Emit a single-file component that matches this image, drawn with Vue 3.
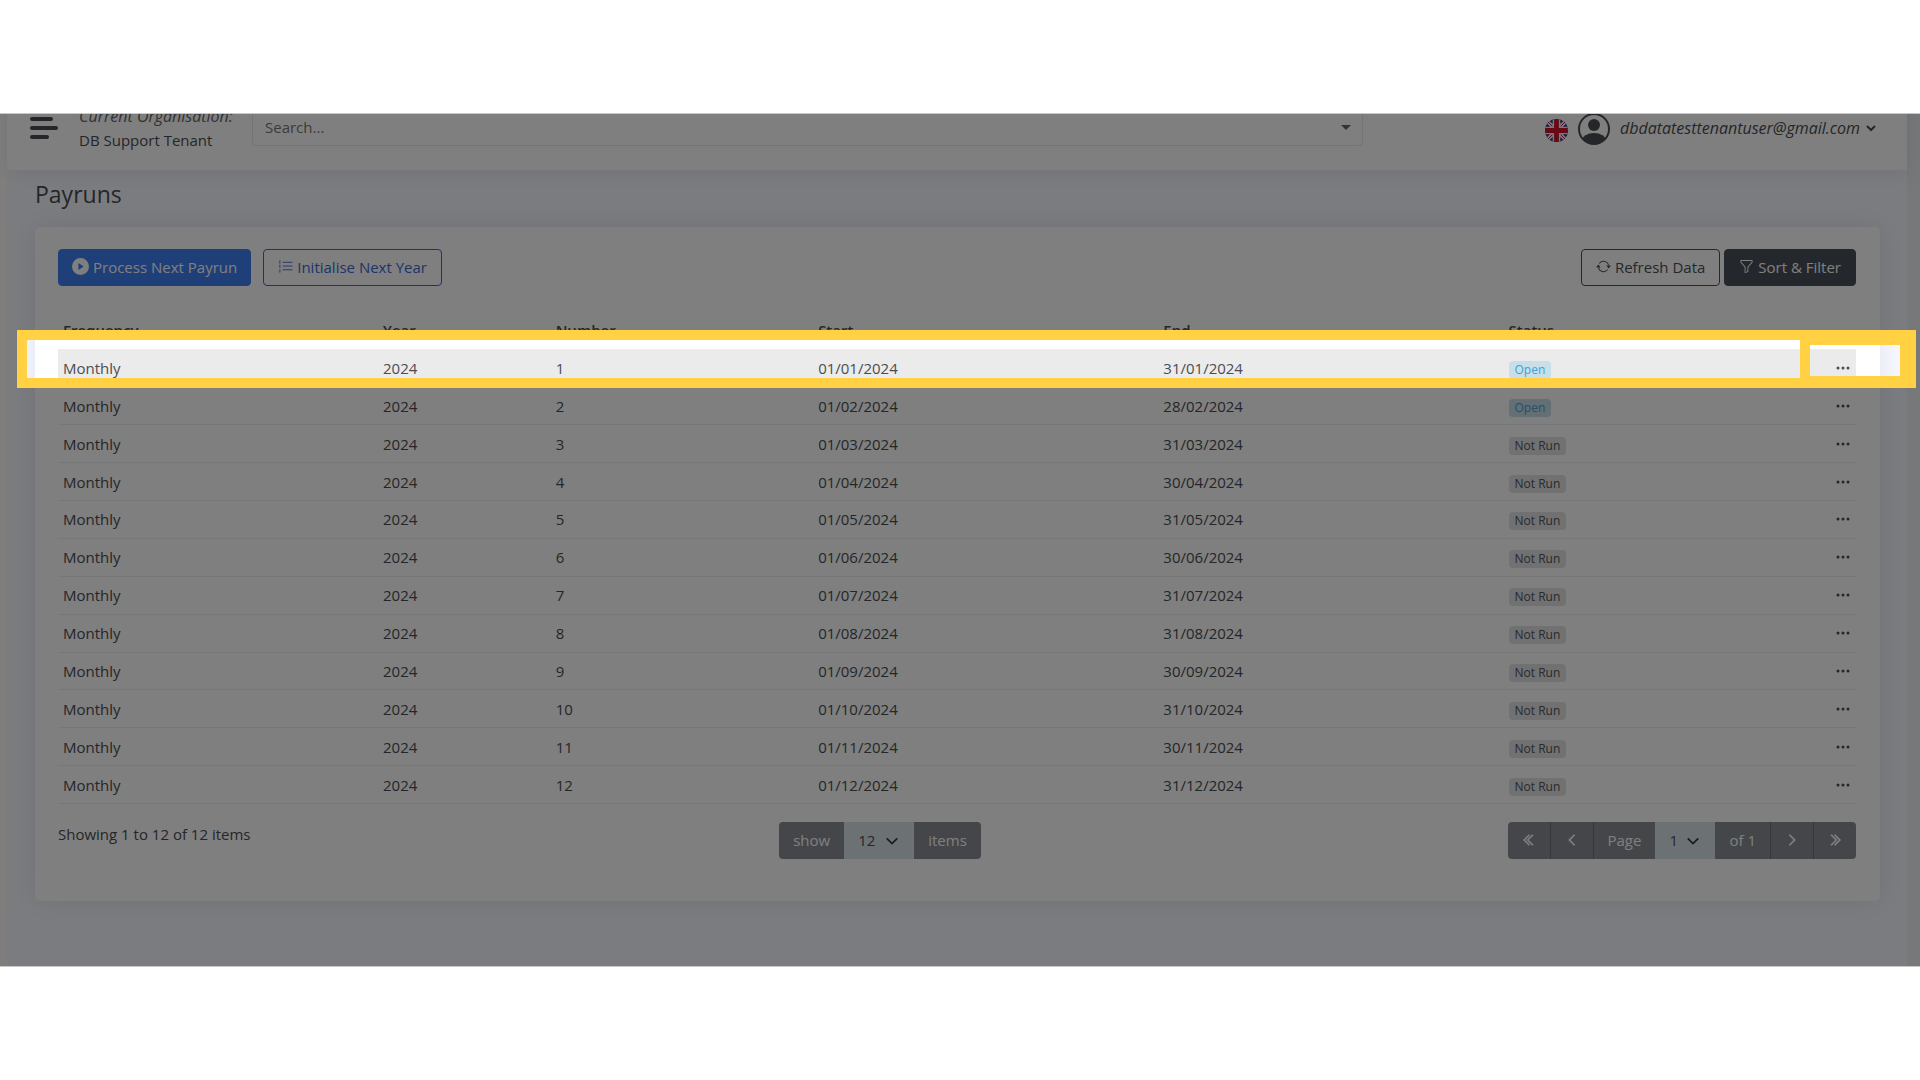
<script setup>
import { ref } from 'vue'

const ends = [
  '31/01/2024', '28/02/2024', '31/03/2024', '30/04/2024', '31/05/2024', '30/06/2024',
  '31/07/2024', '31/08/2024', '30/09/2024', '31/10/2024', '30/11/2024', '31/12/2024',
]
const payruns = ends.map((end, i) => ({
  number: i + 1,
  start: `01/${String(i + 1).padStart(2, '0')}/2024`,
  end,
  open: i < 2,
}))
const search = ref('')
const pageSize = ref('12')
const page = ref('1')
</script>

<template>
  <main class="stage">
    <div class="app">
      <header class="topbar">
        <button class="menu" type="button" aria-label="Toggle menu">
          <span class="line"></span><span class="line long"></span><span class="line short"></span>
        </button>
        <div class="org">
          <em>Current Organisation:</em>
          <span>DB Support Tenant</span>
        </div>
        <div class="search">
          <input v-model="search" type="text" placeholder="Search..." aria-label="Search" />
          <span class="caret"></span>
        </div>
        <div class="user">
          <svg class="flag" viewBox="0 0 24 24" aria-hidden="true">
            <clipPath id="disc"><circle cx="12" cy="12" r="12" /></clipPath>
            <g clip-path="url(#disc)">
              <rect width="24" height="24" fill="#0c3a8c" />
              <path d="M0 0l24 24M24 0L0 24" stroke="#f0f0f0" stroke-width="4" />
              <path d="M3 3l5 5M21 3l-5 5M3 21l5-5M21 21l-5-5" stroke="#d80027" stroke-width="1" />
              <path d="M12 0v24M0 12h24" stroke="#f0f0f0" stroke-width="8" />
              <path d="M12 0v24M0 12h24" stroke="#d0142c" stroke-width="5" />
            </g>
          </svg>
          <svg class="avatar" viewBox="0 0 32 32" aria-hidden="true">
            <clipPath id="face"><circle cx="16" cy="16" r="15" /></clipPath>
            <circle cx="16" cy="16" r="15" fill="none" stroke="currentColor" stroke-width="2" />
            <g clip-path="url(#face)" fill="currentColor">
              <circle cx="16" cy="12" r="6" />
              <ellipse cx="16" cy="28" rx="12" ry="8" />
            </g>
          </svg>
          <a class="email" href="#">dbdatatesttenantuser@gmail.com</a>
          <svg class="chev" viewBox="0 0 10 10" aria-hidden="true"><path d="M1 3l4 4 4-4" fill="none" stroke="currentColor" stroke-width="2" /></svg>
        </div>
      </header>

      <h1>Payruns</h1>

      <section class="card">
        <div class="toolbar">
          <button class="btn primary" type="button">
            <svg viewBox="0 0 16 16" fill="currentColor"><path d="M16 8A8 8 0 1 1 0 8a8 8 0 0 1 16 0zM6.8 5.1A.5.5 0 0 0 6 5.500v5a.5.5 0 0 0 .8.4l3.500-2.500a.5.5 0 0 0 0-.8z" /></svg>
            Process Next Payrun
          </button>
          <button class="btn outline-primary" type="button">
            <svg viewBox="0 0 16 16" fill="none" stroke="currentColor"><path d="M5 3.500h10.500M5 7.500h10.500M5 11.500h10.500M2 1.500v3.500M2 6v3.500M2 11v3.500" /></svg>
            Initialise Next Year
          </button>
          <span class="spacer"></span>
          <button class="btn outline-dark" type="button">
            <svg viewBox="0 0 16 16" fill="currentColor"><path d="M11.534 7h3.932a.25.25 0 0 1 .192.410l-1.966 2.360a.25.25 0 0 1-.384 0l-1.966-2.360a.25.25 0 0 1 .192-.410zm-11 2h3.932a.25.25 0 0 0 .192-.410L2.692 6.230a.25.25 0 0 0-.384 0L.342 8.590A.25.25 0 0 0 .534 9z" /><path d="M8 3c-1.552 0-2.940.707-3.857 1.818a.5.5 0 1 1-.771-.636A6.002 6.002 0 0 1 13.917 7H12.900A5.002 5.002 0 0 0 8 3zM3.100 9a5.002 5.002 0 0 0 8.757 2.182.5.5 0 1 1 .771.636A6.002 6.002 0 0 1 2.083 9H3.100z" /></svg>
            Refresh Data
          </button>
          <button class="btn dark" type="button">
            <svg viewBox="0 0 16 16" fill="currentColor"><path d="M1.500 1.500A.5.5 0 0 1 2 1h12a.5.5 0 0 1 .5.5v2a.5.5 0 0 1-.128.334L10 8.692V13.500a.5.5 0 0 1-.342.474l-3 1A.5.5 0 0 1 6 14.500V8.692L1.628 3.834A.5.5 0 0 1 1.500 3.500v-2zm1 .5v1.308l4.372 4.858A.5.5 0 0 1 7 8.500v5.306l2-.666V8.500a.5.5 0 0 1 .128-.334L13.500 3.308V2h-11z" /></svg>
            Sort &amp; Filter
          </button>
        </div>

        <table>
          <colgroup>
            <col class="c-frequency" /><col class="c-year" /><col class="c-number" />
            <col class="c-date" /><col class="c-date" /><col /><col class="c-menu" />
          </colgroup>
          <thead>
            <tr><th>Frequency</th><th>Year</th><th>Number</th><th>Start</th><th>End</th><th>Status</th><th></th></tr>
          </thead>
          <tbody>
            <tr v-for="p in payruns" :key="p.number" :class="{ hovered: p.number === 1 }">
              <td>Monthly</td>
              <td>2024</td>
              <td>{{ p.number }}</td>
              <td>{{ p.start }}</td>
              <td>{{ p.end }}</td>
              <td><span class="badge" :class="{ open: p.open }">{{ p.open ? 'Open' : 'Not Run' }}</span></td>
              <td>
                <button class="more" type="button" aria-label="Row actions">
                  <svg viewBox="0 0 16 16" fill="currentColor"><circle cx="3" cy="8" r="1.500" /><circle cx="8" cy="8" r="1.500" /><circle cx="13" cy="8" r="1.500" /></svg>
                </button>
              </td>
            </tr>
          </tbody>
        </table>

        <footer class="footer">
          <p>Showing 1 to 12 of 12 items</p>
          <div class="group">
            <label class="seg" for="page-size">show</label>
            <span class="pick">
              <select id="page-size" v-model="pageSize" class="size"><option>12</option></select>
              <svg viewBox="0 0 16 16"><path d="M2 5l6 6 6-6" /></svg>
            </span>
            <span class="seg">items</span>
          </div>
          <nav class="group pager" aria-label="Pages">
            <button class="seg arrow" type="button" aria-label="First page"><svg viewBox="0 0 16 16"><path d="M8.500 2l-6 6 6 6M12.500 2l-6 6 6 6" /></svg></button>
            <button class="seg arrow" type="button" aria-label="Previous page"><svg viewBox="0 0 16 16"><path d="M11 2L5 8l6 6" /></svg></button>
            <label class="seg" for="page-number">Page</label>
            <span class="pick">
              <select id="page-number" v-model="page" class="number"><option>1</option></select>
              <svg viewBox="0 0 16 16"><path d="M2 5l6 6 6-6" /></svg>
            </span>
            <span class="seg">of 1</span>
            <button class="seg arrow" type="button" aria-label="Next page"><svg viewBox="0 0 16 16"><path d="M5 2l6 6-6 6" /></svg></button>
            <button class="seg arrow" type="button" aria-label="Last page"><svg viewBox="0 0 16 16"><path d="M3.500 2l6 6-6 6M7.500 2l6 6-6 6" /></svg></button>
          </nav>
        </footer>
      </section>
    </div>

    <div class="spotlight">
      <div class="frame row-frame"></div>
      <div class="frame menu-frame"></div>
    </div>
  </main>
</template>

<style>
body {
  background: #fff;
}
</style>

<style scoped>
* {
  box-sizing: border-box;
}
.stage {
  position: relative;
  margin: 113px 0;
  overflow: hidden;
  border: solid #c8c8c8;
  border-width: 1px 0;
  color: #4a4d52;
  font: 15px/22px "Open Sans", "Noto Sans", sans-serif;
}
button,
input,
select {
  font: inherit;
  color: inherit;
}
.app {
  padding-bottom: 65px;
  border-left: 7px solid #fefdfb;
  border-right: 13px solid #eef0f3;
  background: #f7f9fe;
}
.topbar {
  display: flex;
  align-items: center;
  height: 83px;
  margin-top: -27px;
  padding: 0 31px 2px 23px;
  background: #fff;
  box-shadow: 0 2px 20px rgba(1, 41, 112, 0.1);
}
.menu {
  display: flex;
  flex-direction: column;
  gap: 5px;
  width: 28px;
  padding: 0;
  border: 0;
  background: none;
}
.line {
  width: 23px;
  height: 4px;
  border-radius: 2px;
  background: #4a4d52;
}
.long {
  width: 28px;
}
.short {
  width: 19px;
}
.org {
  display: flex;
  flex-direction: column;
  width: 173px;
  margin-left: 21px;
  line-height: 24px;
}
.org em {
  color: #666;
  font-size: 16px;
}
.search {
  position: relative;
  flex: 1;
}
.search input {
  display: block;
  width: 100%;
  height: 37px;
  padding: 0 12px 1px;
  border: 1px solid #e4e8f0;
  border-radius: 4px;
  background: #fff;
}
.search input::placeholder {
  color: #777;
  opacity: 1;
}
.caret {
  position: absolute;
  top: 16px;
  right: 12px;
  border: solid transparent;
  border-width: 5px 5px 0;
  border-top-color: #666;
}
.user {
  display: flex;
  align-items: center;
  margin-left: 182px;
}
.flag {
  width: 23px;
  height: 23px;
  margin: 5px 10px 0 0;
}
.avatar {
  width: 32px;
  height: 32px;
  margin: 2px 10px 0 0;
}
.email {
  color: #4a4d52;
  font-size: 16px;
  font-style: italic;
  text-decoration: none;
}
.chev {
  width: 10px;
  height: 10px;
  margin-left: 6px;
}
h1 {
  margin: 8px 28px 0;
  font-size: 23px;
  font-weight: 400;
  line-height: 32px;
}
.card {
  margin: 17px 27px 0 28px;
  padding: 22px 24px 42px 23px;
  border-radius: 5px;
  background: #fff;
  box-shadow: 0 0 28px rgba(1, 41, 112, 0.1);
}
.toolbar {
  display: flex;
  margin-bottom: 25px;
}
.spacer {
  flex: 1;
}
.btn {
  display: flex;
  align-items: center;
  gap: 4px;
  height: 37px;
  padding: 0 13px 2px;
  border: 1px solid;
  border-radius: 4px;
  background: none;
}
.btn svg {
  width: 15px;
  height: 15px;
}
.primary {
  margin-right: 12px;
  border-color: #3e7ef0;
  background: #3e7ef0;
  color: #fff;
}
.primary svg {
  width: 17px;
  height: 17px;
}
.outline-primary {
  padding: 0 14px 2px;
  color: #3d6ad6;
}
.outline-dark {
  margin-right: 4px;
  padding: 0 14px 2px;
  color: #495057;
}
.dark {
  padding: 0 14px 2px;
  border-color: #485058;
  background: #485058;
  color: #fff;
}
table {
  width: 100%;
  height: 493px;
  table-layout: fixed;
  border-collapse: collapse;
}
.c-frequency {
  width: 17.8%;
}
.c-year {
  width: 9.6%;
}
.c-number {
  width: 14.6%;
}
.c-date {
  width: 19.2%;
}
.c-menu {
  width: 60px;
}
th,
td {
  padding: 0 5px;
  border-bottom: 1px solid #eceef0;
  text-align: left;
}
th {
  height: 38px;
  font-weight: 600;
}
.hovered {
  background: #ebebeb;
}
.badge {
  display: inline-block;
  padding: 0 6px;
  border-radius: 4px;
  background: #e2e3e5;
  color: #505459;
  font-size: 12px;
  line-height: 18px;
}
.open {
  background: #c8dfea;
  color: #38a5d4;
}
.more {
  display: block;
  margin-left: auto;
  padding: 0;
  border: 0;
  background: none;
}
.more svg {
  display: block;
  width: 16px;
  height: 16px;
}
.footer {
  display: grid;
  grid-template-columns: 40% auto 1fr;
  margin-top: 18px;
}
.footer p {
  margin: 1px 0 0;
}
.group {
  display: flex;
  height: 37px;
  margin-left: 2px;
  overflow: hidden;
  border-radius: 4px;
}
.pager {
  justify-self: end;
}
.seg {
  display: flex;
  align-items: center;
  padding: 0 14px 1px;
  border: 0;
  background: #8a8c92;
  color: #fff;
}
.seg + .seg {
  border-left: 1px solid #6c6e74;
}
.arrow svg {
  width: 14px;
  height: 14px;
  fill: none;
  stroke: currentColor;
  stroke-width: 2;
}
.pick {
  position: relative;
  display: flex;
}
.pick select {
  appearance: none;
  padding: 0 14px 1px;
  border: 0;
  background: #d9e2e8;
}
.size {
  width: 70px;
}
.number {
  width: 60px;
}
.pick svg {
  position: absolute;
  top: 12px;
  right: 15px;
  width: 14px;
  height: 14px;
  fill: none;
  stroke: #343a40;
  stroke-width: 2;
  pointer-events: none;
}
.spotlight {
  position: absolute;
  top: 216px;
  right: 4px;
  left: 17px;
  display: flex;
  height: 58px;
  box-shadow: 0 0 0 3000px rgba(0, 0, 0, 0.5);
  pointer-events: none;
}
.frame {
  border: 10px solid #ffd143;
}
.row-frame {
  flex: 1;
}
.menu-frame {
  width: 106px;
  border-width: 15px 16px 12px 0;
}
</style>
